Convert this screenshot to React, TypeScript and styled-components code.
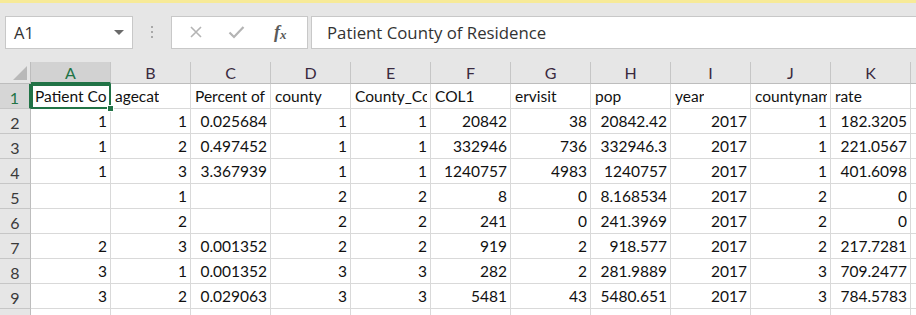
import React from 'react';
import styled, { createGlobalStyle, css } from 'styled-components';

const GlobalStyle = createGlobalStyle`
  html, body { margin: 0; padding: 0; background: #e6e6e6; }
  * { box-sizing: border-box; }
`;

const COLS = ['A', 'B', 'C', 'D', 'E', 'F', 'G', 'H', 'I', 'J', 'K', ''];

/* 첫 줄은 텍스트 (왼쪽 정렬), 나머지는 숫자 (오른쪽 정렬) */
const HEADER_ROW = [
  'Patient County of Residence', 'agecat', 'Percent of total', 'county', 'County_Code',
  'COL1', 'ervisit', 'pop', 'year', 'countyname', 'rate', '_',
];

const DATA: string[][] = [
  ['1', '1', '0.025684', '1', '1', '20842', '38', '20842.42', '2017', '1', '182.3205'],
  ['1', '2', '0.497452', '1', '1', '332946', '736', '332946.3', '2017', '1', '221.0567'],
  ['1', '3', '3.367939', '1', '1', '1240757', '4983', '1240757', '2017', '1', '401.6098'],
  ['', '1', '', '2', '2', '8', '0', '8.168534', '2017', '2', '0'],
  ['', '2', '', '2', '2', '241', '0', '241.3969', '2017', '2', '0'],
  ['2', '3', '0.001352', '2', '2', '919', '2', '918.577', '2017', '2', '217.7281'],
  ['3', '1', '0.001352', '3', '3', '282', '2', '281.9889', '2017', '3', '709.2477'],
  ['3', '2', '0.029063', '3', '3', '5481', '43', '5480.651', '2017', '3', '784.5783'],
  ['', '', '', '', '', '', '', '', '', '', ''],
];

const App = () => {
  return (
    <>
      <GlobalStyle />
      <Page>
        <TopStripe />
        <Toolbar>
          <NameBox>
            <span>A1</span>
            <DropArrow />
          </NameBox>
          <Grip>
            <i />
            <i />
            <i />
          </Grip>
          <FxBox>
            <svg width="14" height="14" viewBox="0 0 14 14">
              <path d="M2 2 L12 12 M12 2 L2 12" stroke="#b4b4b4" strokeWidth="1.6" fill="none" />
            </svg>
            <svg width="17" height="14" viewBox="0 0 17 14">
              <path d="M1.5 7.5 L6 12 L15.5 2" stroke="#b4b4b4" strokeWidth="2.2" fill="none" />
            </svg>
            <FxLabel>
              f<sub>x</sub>
            </FxLabel>
          </FxBox>
          <FormulaInput>Patient County of Residence</FormulaInput>
        </Toolbar>

        <Sheet>
          <Corner>
            <svg width="14" height="14" viewBox="0 0 14 14">
              <path d="M14 0 L14 14 L0 14 Z" fill="#b9b9b9" />
            </svg>
          </Corner>
          {COLS.map((c, i) => (
            <ColHead key={c + i} selected={c === 'A'}>
              {c}
            </ColHead>
          ))}

          <RowHead selected>1</RowHead>
          {HEADER_ROW.map((t, i) => (
            <Cell key={'h' + i} align="left" active={i === 0}>
              <CellText>{t}</CellText>
              {i === 0 && <Handle />}
            </Cell>
          ))}

          {DATA.map((row, r) => (
            <React.Fragment key={r}>
              <RowHead>{r + 2}</RowHead>
              {row.map((v, c) => (
                <Cell key={c} align="right">
                  <CellText>{v}</CellText>
                </Cell>
              ))}
              <Cell align="right" />
            </React.Fragment>
          ))}
        </Sheet>
      </Page>
    </>
  );
};

const Page = styled.div`
  width: 916px;
  height: 315px;
  overflow: hidden;
  background: #e6e6e6;
`;

const TopStripe = styled.div`
  height: 3px;
  background: #f7ea98;
`;

const Toolbar = styled.div`
  height: 59px;
  display: flex;
  align-items: center;
  padding-left: 5px;
  padding-bottom: 1px;
`;

const NameBox = styled.div`
  width: 128px;
  height: 33px;
  background: #fff;
  border: 1px solid #c8c8c8;
  display: flex;
  align-items: center;
  justify-content: space-between;
  padding: 0 8px 0 8px;
  font-family: 'Open Sans', 'Noto Sans', sans-serif;
  font-size: 16.5px;
  color: #333;
`;

const DropArrow = styled.span`
  width: 0;
  height: 0;
  border-left: 5px solid transparent;
  border-right: 5px solid transparent;
  border-top: 5px solid #6a6a6a;
  margin-top: 1px;
`;

const Grip = styled.div`
  width: 38px;
  display: flex;
  flex-direction: column;
  align-items: center;
  gap: 3px;

  i {
    width: 2px;
    height: 2px;
    background: #a8a8a8;
  }
`;

const FxBox = styled.div`
  width: 137px;
  height: 33px;
  background: #fff;
  border: 1px solid #c8c8c8;
  display: flex;
  align-items: center;
  padding-left: 17px;
  gap: 25px;
`;

const FxLabel = styled.span`
  font-family: 'Liberation Serif', serif;
  font-style: italic;
  font-weight: bold;
  font-size: 18px;
  color: #5a5a5a;
  margin-left: 4px;

  sub {
    font-size: 13px;
    vertical-align: -1px;
  }
`;

const FormulaInput = styled.div`
  flex: 1;
  margin-left: 3px;
  margin-right: -4px;
  height: 33px;
  background: #fff;
  border: 1px solid #c8c8c8;
  display: flex;
  align-items: center;
  padding-left: 15px;
  font-family: 'Open Sans', 'Noto Sans', sans-serif;
  font-size: 16.8px;
  color: #333;
`;

const Sheet = styled.div`
  display: grid;
  grid-template-columns: 31px repeat(11, 80px) 1fr;
  grid-template-rows: 22px repeat(10, 25px);
  background: #fff;
  font-family: Lato, 'Liberation Sans', sans-serif;
  font-size: 15.5px;
  color: #111;
`;

const headBase = css`
  background: #e6e6e6;
  display: flex;
  align-items: center;
  justify-content: center;
  font-family: Lato, 'Liberation Sans', sans-serif;
  font-size: 16px;
`;

const Corner = styled.div`
  ${headBase};
  justify-content: flex-end;
  align-items: flex-end;
  padding: 0 3px 3px 0;
  border-right: 1px solid #bdbdbd;
  border-bottom: 1px solid #bdbdbd;
`;

const ColHead = styled.div<{ selected?: boolean }>`
  ${headBase};
  color: ${(p) => (p.selected ? '#217346' : '#3a2a40')};
  background: ${(p) => (p.selected ? '#d2d2d2' : '#e6e6e6')};
  border-right: 1px solid #c6c6c6;
  border-bottom: ${(p) => (p.selected ? '2px solid #217346' : '1px solid #bdbdbd')};
`;

const RowHead = styled.div<{ selected?: boolean }>`
  ${headBase};
  color: ${(p) => (p.selected ? '#217346' : '#3a3a3a')};
  background: ${(p) => (p.selected ? '#d6d6d6' : '#e6e6e6')};
  border-bottom: 1px solid #c6c6c6;
  border-right: ${(p) => (p.selected ? '2px solid #217346' : '1px solid #bdbdbd')};
  padding-top: 2px;
`;

const Cell = styled.div<{ align: 'left' | 'right'; active?: boolean }>`
  position: relative;
  display: flex;
  align-items: flex-end;
  justify-content: ${(p) => (p.align === 'left' ? 'flex-start' : 'flex-end')};
  min-width: 0;
  padding: 0 3px 2px 4px;
  border-right: 1px solid #d9d9d9;
  border-bottom: 1px solid #d9d9d9;
  overflow: ${(p) => (p.active ? 'visible' : 'hidden')};
  white-space: nowrap;
  ${(p) =>
    p.active &&
    css`
      outline: 2px solid #217346;
      outline-offset: -2px;
      z-index: 2;
    `}
`;

const CellText = styled.span`
  display: block;
  min-width: 0;
  max-width: 100%;
  overflow: hidden;
  line-height: 20px;
`;

const Handle = styled.span`
  position: absolute;
  right: -4px;
  bottom: -4px;
  width: 7px;
  height: 7px;
  background: #217346;
  border: 1px solid #fff;
`;

export default App;
